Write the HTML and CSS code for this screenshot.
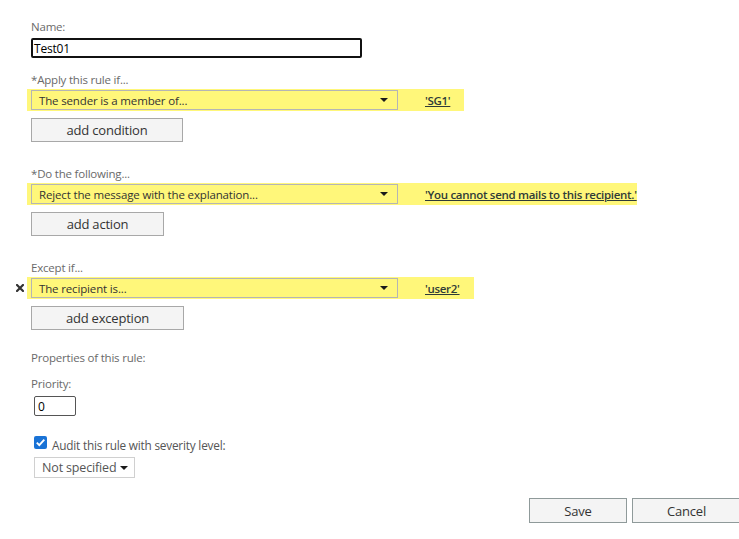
FILE: index.html
```html
<!DOCTYPE html>
<html>
<head>
<meta charset="utf-8">
<link rel="stylesheet" href="styles.css">
</head>
<body>
<div class="page">
  <div class="label">Name:</div>
  <div class="text-input name-input">Test01</div>

  <div class="label section-label first">*Apply this rule if...</div>
  <div class="rule-line">
    <span class="remove-slot"></span>
    <div class="highlight">
      <div class="select wide"><span>The sender is a member of...</span><span class="arrow"></span></div>
      <a class="value-link">'SG1'</a>
    </div>
  </div>
  <div class="btn add-condition">add condition</div>

  <div class="label section-label">*Do the following...</div>
  <div class="rule-line">
    <span class="remove-slot"></span>
    <div class="highlight flush">
      <div class="select wide"><span>Reject the message with the explanation...</span><span class="arrow"></span></div>
      <a class="value-link">'You cannot send mails to this recipient.'</a>
    </div>
  </div>
  <div class="btn add-action">add action</div>

  <div class="label section-label">Except if...</div>
  <div class="rule-line">
    <span class="remove-slot">
      <svg width="8" height="8" viewBox="0 0 8 8"><path d="M1 1 L7 7 M7 1 L1 7" stroke="#333" stroke-width="2.2" stroke-linecap="square"/></svg>
    </span>
    <div class="highlight">
      <div class="select wide"><span>The recipient is...</span><span class="arrow"></span></div>
      <a class="value-link">'user2'</a>
    </div>
  </div>
  <div class="btn add-exception">add exception</div>

  <div class="label props-label">Properties of this rule:</div>
  <div class="label priority-label">Priority:</div>
  <div class="text-input priority-input">0</div>

  <div class="check-row">
    <span class="checkbox">
      <svg width="13" height="13" viewBox="0 0 13 13"><rect x="0" y="0" width="13" height="13" rx="2" fill="#1a73d6"/><path d="M2.8 6.6 L5.3 9.1 L10.3 3.6" fill="none" stroke="#fff" stroke-width="1.9"/></svg>
    </span>
    <span class="check-text">Audit this rule with severity level:</span>
  </div>
  <div class="select small"><span>Not specified</span><span class="arrow"></span></div>

  <div class="footer">
    <div class="btn save">Save</div>
    <div class="btn cancel">Cancel</div>
  </div>
</div>
</body>
</html>
```

FILE: styles.css
```css
html, body {
  margin: 0;
  padding: 0;
  background: #ffffff;
  overflow: hidden;
}
body {
  font-family: "Open Sans", "Noto Sans", "Liberation Sans", sans-serif;
  font-size: 11.5px;
  color: #333;
}
.page {
  width: 739px;
  height: 539px;
  padding: 19px 0 0 31px;
  box-sizing: border-box;
}
.label {
  line-height: 16px;
  height: 16px;
  color: #6a6a6a;
  letter-spacing: -0.2px;
}
.text-input {
  box-sizing: border-box;
  border-radius: 2px;
  color: #000;
  display: flex;
  align-items: center;
  letter-spacing: -0.2px;
}
.name-input {
  margin-top: 3px;
  width: 331px;
  height: 20px;
  border: 2px solid #111;
  padding-left: 1px;
  font-size: 12px;
}
.section-label {
  margin-top: 24px;
  margin-bottom: 1px;
}
.section-label.first {
  margin-top: 14px;
}
.rule-line {
  display: flex;
  align-items: stretch;
  margin-left: -18px;
}
.remove-slot {
  width: 14px;
  display: flex;
  align-items: center;
  justify-content: center;
}
.highlight {
  display: flex;
  align-items: center;
  background: #fff77a;
  padding: 1px 14px 1px 4px;
}
.highlight.flush {
  padding-right: 0;
}
.select {
  box-sizing: border-box;
  display: flex;
  align-items: center;
  justify-content: space-between;
  border: 1px solid #b5b5b5;
  color: #333;
  letter-spacing: -0.15px;
  font-size: 11.5px;
}
.select.wide {
  width: 367px;
  height: 20px;
  padding: 0 9px 0 7px;
}
.arrow {
  width: 0;
  height: 0;
  border-left: 4px solid transparent;
  border-right: 4px solid transparent;
  border-top: 4px solid #1a1a1a;
}
.value-link {
  margin-left: 27px;
  font-weight: 600;
  color: #2f3b38;
  text-decoration: underline;
  letter-spacing: -0.3px;
  font-size: 11.5px;
}
.btn {
  box-sizing: border-box;
  display: flex;
  align-items: center;
  justify-content: center;
  background: #f4f4f4;
  border: 1px solid #a8a8a8;
  color: #333;
  font-size: 13px;
  height: 24px;
  letter-spacing: -0.2px;
}
.add-condition, .add-action, .add-exception {
  margin-top: 7px;
}
.add-condition { width: 152px; }
.add-action { width: 133px; }
.add-exception { width: 153px; }
.props-label {
  margin-top: 20px;
}
.priority-label {
  margin-top: 10px;
}
.priority-input {
  margin: 4px 0 0 3px;
  width: 42px;
  height: 20px;
  border: 1px solid #555;
  padding-left: 3px;
  font-size: 12px;
}
.check-row {
  margin: 20px 0 0 3px;
  display: flex;
  align-items: flex-start;
  height: 16px;
}
.checkbox {
  width: 13px;
  height: 13px;
  display: block;
}
.checkbox svg { display: block; }
.check-text {
  margin-left: 5px;
  margin-top: 1px;
  line-height: 16px;
  color: #555;
  font-size: 11.8px;
  letter-spacing: -0.2px;
}
.select.small {
  margin: 5px 0 0 3px;
  width: 101px;
  height: 21px;
  border-color: #d0d0d0;
  padding: 0 6px 0 7px;
  color: #555;
  font-size: 12.5px;
}
.footer {
  display: flex;
  justify-content: flex-end;
  gap: 5px;
  margin-top: 20px;
  margin-right: -2px;
}
.btn.save {
  width: 98px;
  height: 25px;
  border-color: #8f9a9a;
}
.btn.cancel {
  width: 109px;
  height: 25px;
  border-color: #8f9a9a;
}
```
